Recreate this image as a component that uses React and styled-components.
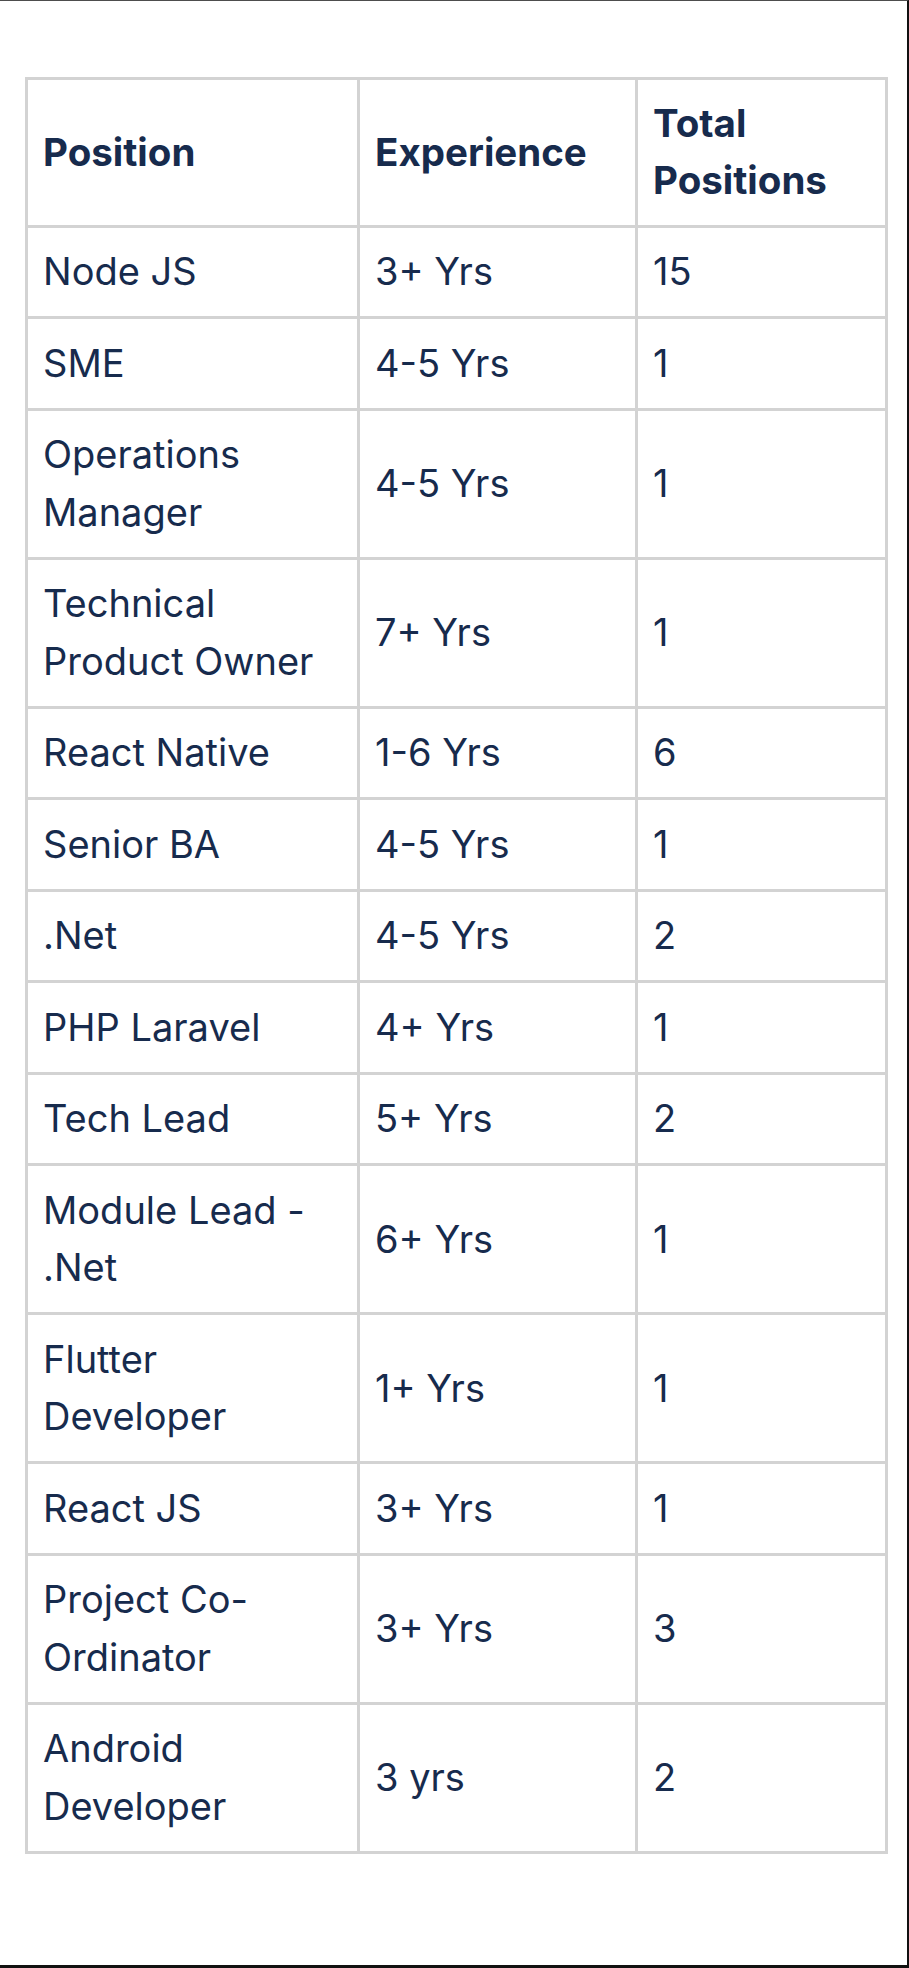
import styled, { createGlobalStyle } from 'styled-components';

const GlobalStyle = createGlobalStyle`
  html, body {
    margin: 0;
    padding: 0;
    background: #fff;
  }
  body {
    font-family: Inter, "Noto Sans", "Liberation Sans", sans-serif;
    color: #172b4d;
  }
`;

const rows = [
  ['Node JS', '3+ Yrs', '15'],
  ['SME', '4-5 Yrs', '1'],
  ['Operations Manager', '4-5 Yrs', '1'],
  ['Technical Product Owner', '7+ Yrs', '1'],
  ['React Native', '1-6 Yrs', '6'],
  ['Senior BA', '4-5 Yrs', '1'],
  ['.Net', '4-5 Yrs', '2'],
  ['PHP Laravel', '4+ Yrs', '1'],
  ['Tech Lead', '5+ Yrs', '2'],
  ['Module Lead - .Net', '6+ Yrs', '1'],
  ['Flutter Developer', '1+ Yrs', '1'],
  ['React JS', '3+ Yrs', '1'],
  ['Project Co-Ordinator', '3+ Yrs', '3'],
  ['Android Developer', '3 yrs', '2'],
];

function App() {
  return (
    <Frame>
      <GlobalStyle />
      <Table>
        <colgroup>
          <col style={{ width: 332 }} />
          <col style={{ width: 278 }} />
          <col style={{ width: 250 }} />
        </colgroup>
        <thead>
          <tr>
            <Head>Position</Head>
            <Head>Experience</Head>
            <Head>Total Positions</Head>
          </tr>
        </thead>
        <tbody>
          {rows.map((r) => (
            <tr key={r[0]}>
              <Cell>{r[0]}</Cell>
              <Cell>{r[1]}</Cell>
              <Cell>{r[2]}</Cell>
            </tr>
          ))}
        </tbody>
      </Table>
    </Frame>
  );
}

export default App;

const Frame = styled.div`
  box-sizing: border-box;
  width: 909px;
  height: 1968px;
  border-top: 1px solid #4d4d4d;
  border-right: 2px solid #111;
  border-bottom: 3px solid #111;
  padding: 76px 0 0 25px;
`;

const Table = styled.table`
  border-collapse: collapse;
  table-layout: fixed;
  width: 860px;
`;

const Head = styled.th`
  border: 3px solid #d3d3d3;
  padding: 15.4px 15px;
  font-size: 38.5px;
  font-weight: 700;
  line-height: 57px;
  text-align: left;
  vertical-align: middle;
  color: #172b4d;
`;

const Cell = styled.td`
  border: 3px solid #d3d3d3;
  padding: 15.5px 15px;
  font-size: 38px;
  font-weight: 400;
  line-height: 57.5px;
  text-align: left;
  vertical-align: middle;
  color: #172b4d;
`;
